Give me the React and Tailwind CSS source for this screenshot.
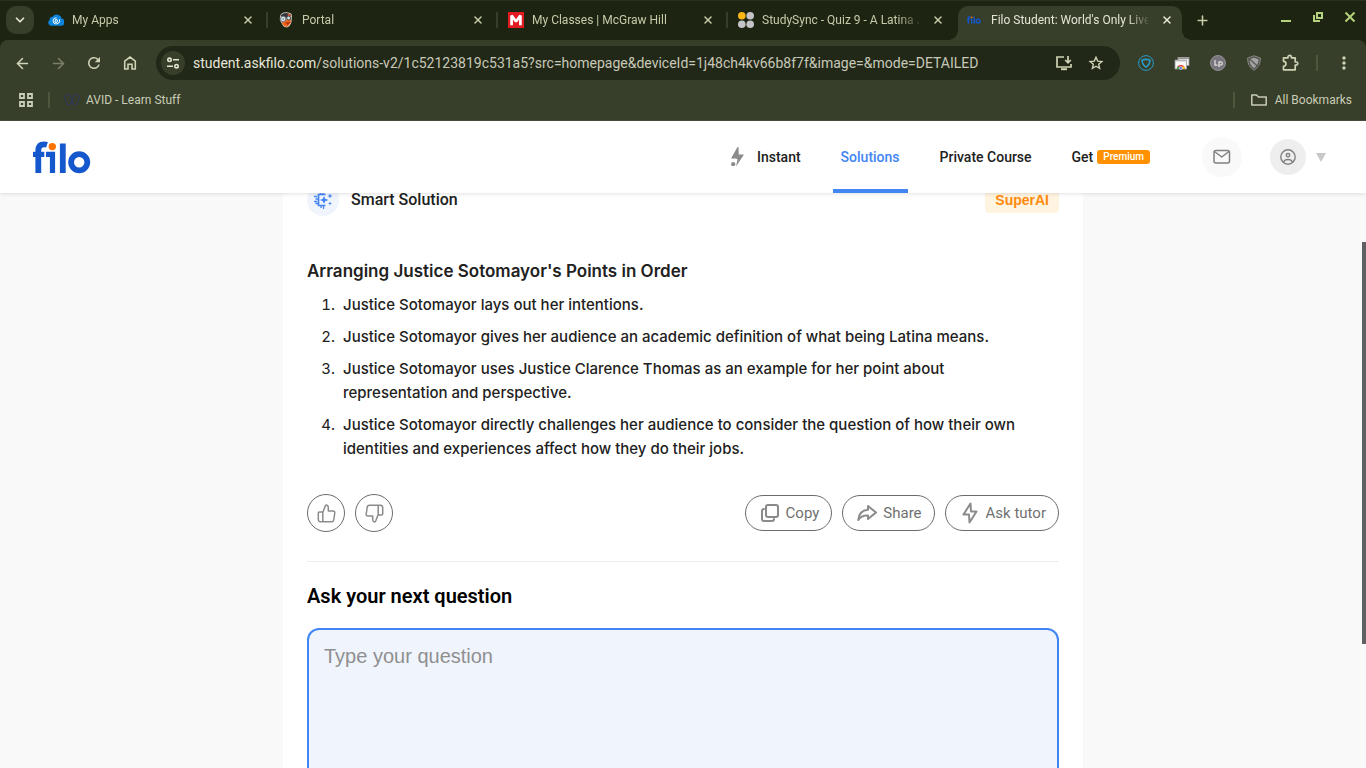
import React from "react";
import { ChevronDown, X, Plus, ArrowLeft, ArrowRight, Mail, Star } from "lucide-react";
import { MdRefresh, MdMoreVert } from "react-icons/md";

function CloudIcon() {
  return (
    <svg width="16" height="16" viewBox="0 0 16 16" aria-hidden="true">
      <path d="M3.200 13.800A3.200 3.200 0 0 1 1.600 8A3.100 3.100 0 0 1 4.600 4.800A5 5 0 0 1 13.600 6.500A3.700 3.700 0 0 1 13 13.800Z" fill="#0b84dd" />
      <ellipse cx="8.400" cy="8.800" rx="3.200" ry="3" fill="none" stroke="#fff" strokeWidth=".9" transform="rotate(-30 8.400 8.800)" strokeDasharray="16 3" />
      <ellipse cx="8.200" cy="9" rx="1.100" ry="1.500" fill="none" stroke="#fff" strokeWidth="1" transform="rotate(25 8.200 9)" />
    </svg>
  );
}

function PortalIcon() {
  return (
    <svg width="16" height="16" viewBox="0 0 16 16" aria-hidden="true">
      <path d="M2 4Q3 .5 8 .3Q13 .5 14 3L13.500 10Q12 15 8.500 15.500Q5 15 3.500 11L1.800 8Z" fill="#d7d3cb" />
      <path d="M2.500 4Q4 1 8 1T13.500 3.500L10 5.500L4 5Z" fill="#34343c" />
      <path d="M9.500 1.500L12.500 2.500L12.800 4.500L10 4Z" fill="#e4572a" />
      <path d="M6 8L13 7Q13 13 8.500 15Q4 13 4 10.500Z" fill="#f0641e" />
      <path d="M7 10.500L13 10L9.500 13Z" fill="#b53410" />
      <circle cx="5.200" cy="7" r="2.700" fill="#e9edf0" stroke="#6a7078" />
      <circle cx="5.200" cy="7.100" r="1.200" fill="#8ba8b8" />
      <circle cx="10.600" cy="6" r="2" fill="#cfe0e8" stroke="#444" />
    </svg>
  );
}

function McGrawIcon() {
  return (
    <svg width="16" height="16" viewBox="0 0 16 16" aria-hidden="true">
      <rect width="16" height="16" fill="#e21b23" />
      <path d="M3.600 13.200V3.500L8 9.500L12.400 3.500V13.200" fill="none" stroke="#fff" strokeWidth="2.700" strokeLinejoin="bevel" />
    </svg>
  );
}

function DotsIcon() {
  return (
    <svg width="16" height="16" viewBox="0 0 16 16" aria-hidden="true">
      <circle cx="3.800" cy="3.800" r="3.800" fill="#fcb514" />
      <circle cx="12.200" cy="3.800" r="3.800" fill="#c4c4c8" />
      <circle cx="3.800" cy="12.200" r="3.800" fill="#c4c4c8" />
      <circle cx="12.200" cy="12.200" r="3.800" fill="#c4c4c8" />
    </svg>
  );
}

function FiloLogo({ className }) {
  return (
    <svg viewBox="0 0 58 33" className={className} role="img" aria-label="filo">
      <g fill="none" stroke="#1557cd" strokeWidth="5.800">
        <path d="M5.300 32V9.500Q5.300 3.300 11 3.300Q12.500 3.300 14 3.800" />
        <path d="M0 13.400H11.300" strokeWidth="5.200" />
        <path d="M13 13.400H19.500V32" strokeWidth="5.200" />
        <path d="M29.800 2.500V32" />
        <circle cx="46.200" cy="21.200" r="8.100" />
      </g>
      <circle cx="19.300" cy="5.600" r="3.700" fill="#ff7300" />
    </svg>
  );
}

const tabs = [
  { title: "My Apps", icon: <CloudIcon /> },
  { title: "Portal", icon: <PortalIcon /> },
  { title: "My Classes | McGraw Hill", icon: <McGrawIcon /> },
  { title: "StudySync - Quiz 9 - A Latina Judge", icon: <DotsIcon /> },
];

function TabBody({ icon, title, active }) {
  return (
    <>
      <span className="flex w-4 shrink-0 items-center">{icon}</span>
      <span
        className={
          "ml-2 w-[157px] shrink-0 overflow-hidden whitespace-nowrap text-xs [mask-image:linear-gradient(to_right,#000_136px,transparent_160px)] " +
          (active ? "text-[#e4e5d6]" : "text-[#c6cba9]")
        }
      >
        {title}
      </span>
      <button aria-label={"Close " + title} className={"ml-[11px] flex size-4 shrink-0 items-center justify-center " + (active ? "text-[#e8ead8]" : "text-[#c6cba9]")}>
        <X size={12} strokeWidth={3} />
      </button>
    </>
  );
}

function TabStrip() {
  return (
    <div className="flex h-10 items-start border-t border-[#2a301f] bg-[#1d2411] pl-1.5">
      <button aria-label="Search tabs" className="mt-[5px] flex size-7 shrink-0 items-center justify-center rounded-[10px] bg-[#373e29] text-[#e4e5d6]">
        <ChevronDown size={14} strokeWidth={3} />
      </button>
      <div className="ml-1 flex">
        {tabs.map((t, i) => (
          <div key={t.title} className="flex h-[38px] w-[230px] items-center pl-2.5">
            <TabBody {...t} />
            {i < 3 && <span className="ml-[10px] h-4 w-0.5 bg-[#373e29]" />}
          </div>
        ))}
        <div className="relative mt-[5px] flex h-[34px] w-[224px] items-center rounded-t-[10px] bg-[#373e29] pb-[6px] pl-[9px]">
          <span className="absolute -left-2.5 bottom-0 size-2.5 bg-[radial-gradient(circle_at_0_0,transparent_10px,#373e29_10px)]" />
          <span className="absolute -right-2.5 bottom-0 size-2.5 bg-[radial-gradient(circle_at_100%_0,transparent_10px,#373e29_10px)]" />
          <TabBody active icon={<FiloLogo className="w-[14px]" />} title="Filo Student: World's Only Live Instant" />
        </div>
      </div>
      <button aria-label="New tab" className="ml-2.5 mt-[9px] flex size-5 items-center justify-center text-[#c6cba9]">
        <Plus size={15} strokeWidth={2.500} />
      </button>
      <div className="ml-auto flex gap-4 pr-2 pt-2 text-[#b5d27c]">
        <button aria-label="Minimize">
          <svg width="16" height="16" viewBox="0 0 16 16"><path d="M3 12H13" stroke="currentColor" strokeWidth="2" /></svg>
        </button>
        <button aria-label="Restore">
          <svg width="16" height="16" viewBox="0 0 16 16" fill="none" stroke="currentColor" strokeWidth="2"><path d="M7 4H12V9H7Z" /><path d="M4 6V12H10" /></svg>
        </button>
        <button aria-label="Close window">
          <svg width="16" height="16" viewBox="0 0 16 16"><path d="M3.500 3.500L12.500 12.500M12.500 3.500L3.500 12.500" stroke="currentColor" strokeWidth="2" /></svg>
        </button>
      </div>
    </div>
  );
}

function ToolButton({ label, children, className = "" }) {
  return (
    <button aria-label={label} className={"flex size-9 shrink-0 items-center justify-center " + className}>
      {children}
    </button>
  );
}

function Toolbar() {
  return (
    <div className="flex h-[46px] items-center px-1 text-[#cfd3b6]">
      <ToolButton label="Back"><ArrowLeft size={17} strokeWidth={2.200} /></ToolButton>
      <ToolButton label="Forward" className="text-[#7b7f68]"><ArrowRight size={17} strokeWidth={2.200} /></ToolButton>
      <ToolButton label="Reload"><MdRefresh size={18} /></ToolButton>
      <ToolButton label="Home">
        <svg width="16" height="16" viewBox="0 0 16 16" fill="none" stroke="currentColor" strokeWidth="1.600"><path d="M2.700 14V6.200L8 2L13.300 6.200V14H10V9.300H6V14Z" /></svg>
      </ToolButton>
      <div className="ml-2 flex h-[34px] min-w-0 flex-1 items-center rounded-full bg-[#222817] pl-[5px] pr-3">
        <button aria-label="Site information" className="flex size-6 shrink-0 items-center justify-center rounded-full bg-[#373e29] text-[#e4e5d6]">
          <svg width="14" height="14" viewBox="0 0 14 14" fill="none" stroke="currentColor" strokeWidth="1.600"><circle cx="3.500" cy="3.800" r="1.700" /><path d="M7 3.800H13M1 10.200H7" /><circle cx="10.500" cy="10.200" r="1.700" /></svg>
        </button>
        <div className="ml-2 flex-1 truncate text-sm text-[#c8c8b9]">
          <span className="text-[#e6e6d8]">student.askfilo.com</span>/solutions-v2/1c52123819c531a5?src=homepage&amp;deviceId=1j48ch4kv66b8f7f&amp;image=&amp;mode=DETAILED
        </div>
        <button aria-label="Install app" className="mr-1 flex size-8 items-center justify-center">
          <svg width="18" height="18" viewBox="0 0 18 18" fill="none" stroke="currentColor" strokeWidth="1.700"><path d="M9 3H2V13H16V10" /><path d="M6 15.200H12" strokeWidth="2" /><path d="M13 2V8.500M10.200 6L13 8.800L15.800 6" /></svg>
        </button>
        <button aria-label="Bookmark this page" className="flex size-6 items-center justify-center">
          <svg width="16" height="16" viewBox="0 0 16 16" fill="none" stroke="currentColor" strokeWidth="1.400"><path d="M8 2.200L9.700 6.100L13.900 6.500L10.700 9.300L11.600 13.400L8 11.200L4.400 13.400L5.300 9.300L2.100 6.500L6.300 6.100Z" /></svg>
        </button>
      </div>
      <div className="ml-2 flex">
        <ToolButton label="Shield extension">
          <svg width="16" height="16" viewBox="0 0 16 16" fill="none" stroke="#2a9cc9"><circle cx="8" cy="8" r="7.400" strokeWidth="1" /><path d="M4 5.200Q8 3.600 12 5.200Q11.800 9.500 8 12.200Q4.200 9.500 4 5.200Z" strokeWidth="1.600" /></svg>
        </ToolButton>
        <ToolButton label="Image viewer extension">
          <svg width="16" height="16" viewBox="0 0 16 16"><rect x="4" y="2.400" width="11" height="8" fill="#f4f4f4" stroke="#999" strokeWidth=".8" /><path d="M4 3.500H15" stroke="#999" /><rect x="1" y="5" width="11.500" height="9" fill="#f8f8f8" stroke="#999" strokeWidth=".8" /><path d="M1 5.800H12.500" stroke="#aaa" /><path d="M2.800 14A4 4 0 0 1 10.800 14Z" fill="#e43d30" /><path d="M2.800 14L4 11L6.500 14Z" fill="#2da94f" /><path d="M7 14L8.500 11.500H10.200L10.800 14Z" fill="#fbc116" /><circle cx="6.800" cy="13" r="1.500" fill="#3f7fea" stroke="#fff" strokeWidth=".5" /></svg>
        </ToolButton>
        <ToolButton label="LP extension">
          <svg width="16" height="16" viewBox="0 0 16 16"><circle cx="8" cy="8" r="7.500" fill="#77757b" stroke="#929095" /><path d="M5 5V10.200H7.500M9 12V6.800H10.500Q12.300 6.800 12.300 8.400T10.500 10H9" fill="none" stroke="#e4e4e4" strokeWidth="1.200" /></svg>
        </ToolButton>
        <ToolButton label="Privacy extension">
          <svg width="16" height="16" viewBox="0 0 16 16"><path d="M8 .8L14.500 3Q14.500 11.500 8 15.300Q1.500 11.500 1.500 3Z" fill="#55564f" stroke="#858680" /><path d="M8 2.800L12.500 4.300Q12.500 10.200 8 13.200Q3.500 10.200 3.500 4.300Z" fill="#a4a4a4" /><path d="M3.500 4L12.500 12" stroke="#55564f" strokeWidth="1.200" /></svg>
        </ToolButton>
        <ToolButton label="Extensions">
          <svg width="18" height="18" viewBox="0 0 18 18" fill="none" stroke="currentColor" strokeWidth="1.700"><path d="M2.500 3.800H7V3A1.700 1.700 0 0 1 10.400 3V3.800H14.200V8H15.200A1.600 1.600 0 0 1 15.200 11.200H14.200V15.800H2.500V12.300Q5 12 5 9.800T2.500 7.300Z" strokeLinejoin="round" /></svg>
        </ToolButton>
      </div>
      <span className="ml-2 h-4 w-0.5 bg-[#50563c]" />
      <ToolButton label="Menu" className="ml-2"><MdMoreVert size={20} /></ToolButton>
    </div>
  );
}

function BookmarksBar() {
  return (
    <div className="flex h-[35px] items-center border-b border-[#4b4b3f] px-3.5 pb-[7px] text-xs text-[#c9ccb6]">
      <button aria-label="Apps" className="ml-1">
        <svg width="16" height="16" viewBox="0 0 16 16" fill="none" stroke="currentColor" strokeWidth="1.800"><path d="M2 2H6V6H2ZM10 2H14V6H10ZM2 10H6V14H2ZM10 10H14V14H10Z" /></svg>
      </button>
      <span className="ml-[14px] h-4 w-0.5 bg-[#50563c]" />
      <a href="#avid" className="ml-[14px] flex items-center gap-1.5">
        <svg width="16" height="16" viewBox="0 0 16 16" fill="none" stroke="#30385a" strokeWidth="1.200"><path d="M1 3Q1 12 5 13Q7 12 8 8Q9 12 11 13Q15 12 15 3M3 3Q7 1 7 8M13 3Q9 1 9 8" /></svg>
        AVID - Learn Stuff
      </a>
      <span className="ml-auto h-4 w-0.5 bg-[#50563c]" />
      <button className="ml-4 flex items-center gap-2">
        <svg width="16" height="16" viewBox="0 0 16 16" fill="none" stroke="currentColor" strokeWidth="1.500" strokeLinejoin="round"><path d="M.8 3H5.500L7.500 5H15.200V13H.8Z" /></svg>
        All Bookmarks
      </button>
    </div>
  );
}

function SiteHeader() {
  return (
    <header className="relative z-10 flex h-[72px] shrink-0 items-center bg-white pl-[33px] pr-10 shadow-[0_1px_4px_rgba(0,0,0,0.12)]">
      <a href="#home"><FiloLogo className="w-[58px]" /></a>
      <nav className="ml-auto flex h-full items-center gap-6 text-sm font-medium text-[#212121]">
        <a href="#instant" className="flex items-center gap-3 px-2">
          <svg width="16" height="20" viewBox="0 0 16 20" fill="#8b8b8b"><path d="M8.500 0L2 11.500H7L8.500 12.500L7 19.500L15 7.500H9.800L9.500 0Z" /><circle cx="4.200" cy="17.200" r="2.100" /></svg>
          Instant
        </a>
        <a href="#solutions" className="flex h-full items-center border-b-4 border-[#4285f4] px-2 pt-1 text-[#4285f4]">Solutions</a>
        <a href="#course" className="px-2">Private Course</a>
        <a href="#premium" className="flex items-center gap-1 pl-2">
          Get
          <span className="rounded-[3px] bg-[#ff9100] px-1.5 text-[10px] leading-[14px] text-white">Premium</span>
        </a>
      </nav>
      <button aria-label="Messages" className="ml-[52px] flex size-10 items-center justify-center rounded-full bg-[#f9f9f9] text-[#808080]">
        <svg width="18" height="16" viewBox="0 0 18 16" fill="none" stroke="currentColor" strokeWidth="1.500" strokeLinejoin="round"><rect x="1" y="1.500" width="15.500" height="12.500" rx="2" /><path d="M1.500 2.500L8.750 8L16 2.500" /></svg>
      </button>
      <button aria-label="Account" className="ml-7 flex items-center gap-2.5">
        <span className="flex size-9 items-center justify-center rounded-full bg-[#eee] text-[#808080]">
          <svg width="16" height="16" viewBox="0 0 16 16" fill="none" stroke="currentColor" strokeWidth="1.400"><circle cx="8" cy="8" r="7.200" /><circle cx="8" cy="6.200" r="1.700" /><path d="M3.800 13.500Q4 10.500 8 10.500T12.200 13.500" /></svg>
        </span>
        <svg width="10" height="9" viewBox="0 0 10 9" fill="#c8c8c8"><path d="M0 0H10L5 9Z" /></svg>
      </button>
    </header>
  );
}

const points = [
  "Justice Sotomayor lays out her intentions.",
  "Justice Sotomayor gives her audience an academic definition of what being Latina means.",
  "Justice Sotomayor uses Justice Clarence Thomas as an example for her point about representation and perspective.",
  "Justice Sotomayor directly challenges her audience to consider the question of how their own identities and experiences affect how they do their jobs.",
];

function ThumbIcon({ className = "" }) {
  return (
    <svg width="19" height="19" viewBox="0 0 19 19" fill="none" stroke="#8b8b8b" strokeWidth="1.500" strokeLinejoin="round" className={className}>
      <path d="M1.300 9Q1.300 8 2.500 8H6L8.300 2Q8.800 .8 10 1.200T11.300 3V7H16Q18 7.100 17.800 9L16.800 15.500Q16.500 17.800 14.800 17.800H3.500Q1.500 17.800 1.300 15.500ZM5.800 8V17.800" />
    </svg>
  );
}

function Pill({ icon, children }) {
  return (
    <button className="flex h-9 items-center gap-1.5 rounded-full border border-[#6b6b6b] pl-3.5 pr-3 text-[15px] text-[#707070]">
      <svg width="20" height="22" viewBox="0 0 20 22" fill="none" stroke="#8b8b8b" strokeWidth="2" strokeLinejoin="round" strokeLinecap="round">
        {icon}
      </svg>
      {children}
    </button>
  );
}

function SmartIcon() {
  return (
    <svg width="20" height="20" viewBox="0 0 20 20" fill="none" stroke="#4285f4">
      <path d="M12.500 4.500H5.500V15.500H12.500" strokeWidth="1.700" />
      <path d="M1 6.500H4M2.500 9H5M1 11.500H4M2.500 13.500H5" strokeWidth="1.300" />
      <path d="M7.500 2V4M10 1V4M8 16V18M10.500 16V19" strokeWidth="1.300" />
      <path d="M11 6L12.200 8.800L15.500 10L12.200 11.200L11 14L9.800 11.200L7 10L9.800 8.800ZM17 3.500L17.700 5.300L19.500 6L17.700 6.700L17 8.500L16.300 6.700L14.500 6L16.300 5.300ZM17 11.500L17.600 12.900L19 13.500L17.600 14.100L17 15.500L16.400 14.100L15 13.500L16.400 12.900Z" fill="#4285f4" stroke="none" />
    </svg>
  );
}

function Solution() {
  return (
    <article className="mx-auto -mt-[25px] w-full max-w-[800px] bg-white px-6 pt-4">
      <div className="flex h-8 items-center">
        <span className="flex size-8 items-center justify-center rounded-full bg-[#f0f4fd]"><SmartIcon /></span>
        <h1 className="ml-3 text-base font-medium text-[#212121]">Smart Solution</h1>
        <span className="ml-auto rounded bg-[#fff4e0] px-2.5 py-0.5 font-['Liberation_Sans',sans-serif] text-sm font-bold leading-[22px] text-[#ff8a0d]">SuperAI</span>
      </div>
      <div className="font-[Inter,sans-serif] text-[#212121]">
        <h2 className="mb-2 mt-[41px] text-[17px] font-semibold leading-7">Arranging Justice Sotomayor's Points in Order</h2>
        <ol className="list-decimal space-y-2 pl-8 text-[15px] leading-6">
          {points.map((p) => (
            <li key={p} className="pl-1 pr-6"><span className="font-medium">{p}</span></li>
          ))}
        </ol>
      </div>
      <div className="mt-[33px] flex items-center gap-2.5 border-b border-[#ededed] pb-[29px]">
        <button aria-label="Like" className="flex size-[38px] items-center justify-center rounded-full border border-[#6b6b6b]"><ThumbIcon /></button>
        <button aria-label="Dislike" className="mr-auto flex size-[38px] items-center justify-center rounded-full border border-[#6b6b6b]"><ThumbIcon className="rotate-180" /></button>
        <Pill icon={<><rect x="6" y="3" width="12" height="12" rx="2" /><path d="M4 7Q2 7 2 9V17Q2 19 4 19H12Q14 19 14 17" /></>}>Copy</Pill>
        <Pill icon={<path d="M11 4L19 10.500L11 17V13.500Q4.500 13 1.300 18Q2 8.500 11 7.800Z" />}>Share</Pill>
        <Pill icon={<path d="M10.500 1.500L3.500 12.500H9L9.500 20.500L16.500 9.500H11Z" />}>Ask tutor</Pill>
      </div>
      <label htmlFor="question" className="mt-5 block text-xl font-semibold leading-7 text-black">Ask your next question</label>
      <textarea
        id="question"
        placeholder="Type your question"
        className="mt-[18px] block h-[200px] w-full resize-none rounded-xl border-2 border-[#4285f4] bg-[#f0f4fd] px-[15px] py-3 font-['Liberation_Sans',sans-serif] text-xl outline-none placeholder:text-[#8f8f8f]"
      />
    </article>
  );
}

export default function App() {
  return (
    <div className="flex h-screen flex-col overflow-hidden bg-[#f9f9f9] font-[Roboto,sans-serif]">
      <div className="shrink-0 bg-[#1d2411]">
        <TabStrip />
        <div className="rounded-t-lg bg-[#373e29]">
          <Toolbar />
          <BookmarksBar />
        </div>
      </div>
      <SiteHeader />
      <main className="relative flex-1 overflow-hidden">
        <Solution />
        <span className="absolute right-0 top-[49px] h-[402px] w-1 bg-[#5f6063]" />
      </main>
    </div>
  );
}
